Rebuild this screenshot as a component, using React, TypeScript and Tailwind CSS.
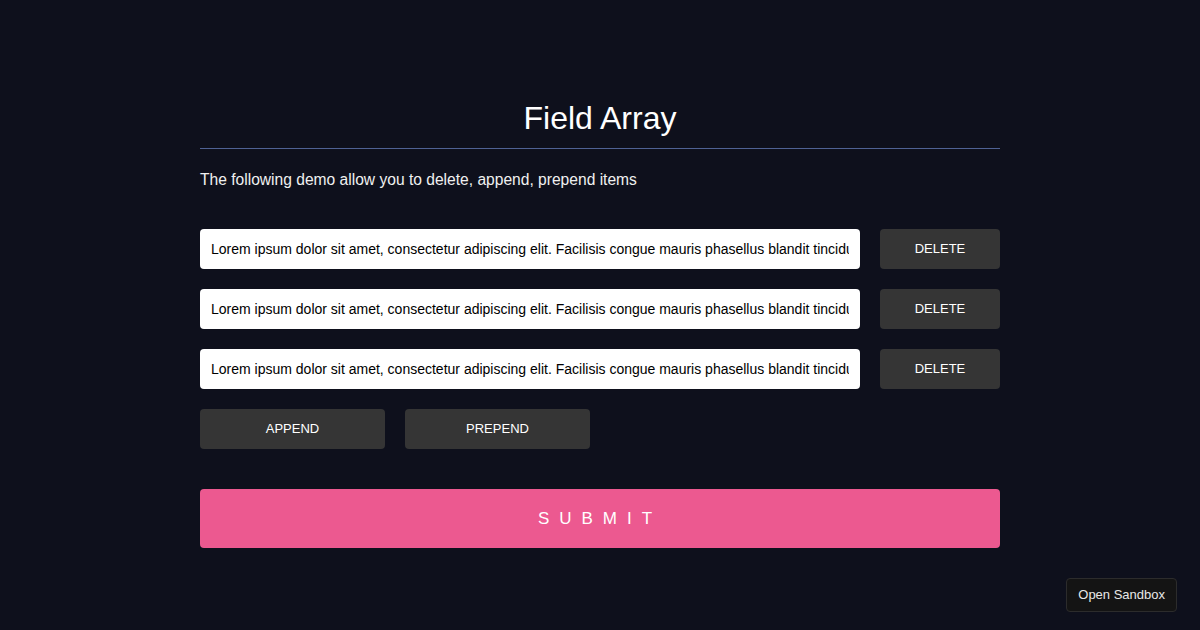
export default function App() {
  const text =
    "Lorem ipsum dolor sit amet, consectetur adipiscing elit. Facilisis congue mauris phasellus blandit tincidunt";
  const rows = [0, 1, 2];

  return (
    <div className="min-h-[630px] w-full bg-[#0e101c] font-['Liberation_Sans',Arial,sans-serif] text-white relative">
      <div className="mx-auto w-[800px] pt-[100px]">
        <h1 className="text-center text-[32px] leading-[37px] font-normal pb-[11px] border-b border-[#4f6294]">
          Field Array
        </h1>
        <p className="mt-[21px] text-[15.6px] leading-[20px] text-[#f0f0f0]">
          The following demo allow you to delete, append, prepend items
        </p>

        <div className="mt-[39px] flex flex-col gap-[20px]">
          {rows.map((i) => (
            <div key={i} className="flex gap-[20px]">
              <input
                defaultValue={text}
                className="h-[40px] w-[660px] rounded-[4px] bg-white px-[11px] text-[14px] text-black outline-none"
              />
              <button className="h-[40px] w-[120px] rounded-[4px] bg-[#353535] text-[13px] text-white">
                DELETE
              </button>
            </div>
          ))}
          <div className="flex gap-[20px]">
            <button className="h-[40px] w-[185px] rounded-[4px] bg-[#353535] text-[13px] text-white">
              APPEND
            </button>
            <button className="h-[40px] w-[185px] rounded-[4px] bg-[#353535] text-[13px] text-white">
              PREPEND
            </button>
          </div>
        </div>

        <button className="mt-[40px] h-[59px] w-full rounded-[4px] bg-[#ec5990] text-[17px] tracking-[10px] text-white">
          SUBMIT
        </button>
      </div>

      <button className="absolute right-[23px] bottom-[18px] h-[34px] rounded-[4px] border border-[#2c2c2c] bg-[#141414] px-[11px] text-[13px] text-[#e8e8e8]">
        Open Sandbox
      </button>
    </div>
  );
}
